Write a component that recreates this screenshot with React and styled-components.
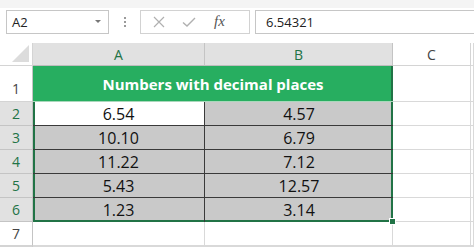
import styled, { createGlobalStyle } from 'styled-components';

const GlobalStyle = createGlobalStyle`
  html, body {
    margin: 0;
    padding: 0;
    background: #ffffff;
    font-family: 'Open Sans', 'Liberation Sans', sans-serif;
    overflow: hidden;
  }
`;

const Page = styled.div`
  width: 474px;
  height: 247px;
  display: flex;
  flex-direction: column;
  background: #fff;
  border-top: 8px solid #f4f4f4;
  box-sizing: border-box;
  overflow: hidden;
`;

const FormulaBar = styled.div`
  display: flex;
  align-items: center;
  height: 26px;
  padding: 1px 0 0 6px;
`;

const NameBox = styled.div`
  width: 103px;
  height: 24px;
  box-sizing: border-box;
  border: 1px solid #c6c6c6;
  display: flex;
  align-items: center;
  justify-content: space-between;
  padding: 0 7px 0 5px;
  font-size: 13px;
  color: #222;
`;

const Caret = styled.span`
  width: 0;
  height: 0;
  border-left: 3px solid transparent;
  border-right: 3px solid transparent;
  border-top: 3px solid #777;
`;

const Dots = styled.div`
  width: 31px;
  display: flex;
  flex-direction: column;
  align-items: center;
  gap: 2px;
  & > span {
    width: 2px;
    height: 2px;
    background: #9a9a9a;
  }
`;

const ButtonBox = styled.div`
  width: 110px;
  height: 24px;
  box-sizing: border-box;
  border: 1px solid #d2d2d2;
  display: flex;
  align-items: center;
  padding-left: 12px;
  gap: 17px;
`;

const Fx = styled.span`
  font-family: 'Liberation Serif', serif;
  font-style: italic;
  font-size: 15px;
  color: #555;
  margin-left: 1px;
`;

const InputBox = styled.div`
  margin-left: 5px;
  flex: 1;
  height: 24px;
  box-sizing: border-box;
  border: 1px solid #c6c6c6;
  border-right: none;
  display: flex;
  align-items: center;
  padding-left: 10px;
  font-size: 13px;
  color: #222;
`;

const Grid = styled.div`
  margin-top: 9px;
  display: grid;
  grid-template-columns: 33px 172px 188px 78px 1fr;
  grid-template-rows: 23px 36px repeat(6, 24px) 1fr;
  flex: 1;
`;

const Corner = styled.div`
  border-right: 1px solid #d4d4d4;
  border-bottom: 1px solid #d4d4d4;
  background: #fff;
  position: relative;
  overflow: hidden;
  &::after {
    content: '';
    position: absolute;
    right: 3px;
    bottom: 3px;
    width: 0;
    height: 0;
    border-left: 17px solid transparent;
    border-bottom: 17px solid #dcdcdc;
  }
`;

const ColHead = styled.div`
  display: flex;
  align-items: center;
  justify-content: center;
  font-size: 14px;
  box-sizing: border-box;
  color: ${(p) => (p.active ? '#217346' : '#444')};
  background: ${(p) => (p.active ? '#e1e1e1' : '#fff')};
  border-right: 1px solid ${(p) => (p.active ? '#c4c4c4' : '#d4d4d4')};
  border-bottom: 1px solid ${(p) => (p.active ? '#bdbdbd' : '#d4d4d4')};
`;

const RowHead = styled.div`
  display: flex;
  align-items: ${(p) => (p.tall ? 'flex-end' : 'center')};
  padding-bottom: ${(p) => (p.tall ? '3px' : '0')};
  justify-content: center;
  font-size: 14px;
  box-sizing: border-box;
  color: ${(p) => (p.active ? '#217346' : '#444')};
  background: ${(p) => (p.active ? '#e1e1e1' : '#fff')};
  border-bottom: 1px solid ${(p) => (p.active ? '#c4c4c4' : '#d4d4d4')};
  border-right: 1px solid #c4c4c4;
`;

const Title = styled.div`
  grid-column: span 2;
  background: #27ae60;
  color: #fff;
  font-weight: 700;
  font-size: 15px;
  display: flex;
  align-items: center;
  justify-content: center;
  border-bottom: 1px solid #a9d8bb;
  box-shadow: inset -2px 0 0 #217346;
`;

const edge = (p) => {
  const s = [];
  if (p.left) s.push('inset 2px 0 0 #217346');
  if (p.right) s.push('inset -2px 0 0 #217346');
  if (p.bottom) s.push('inset 0 -2px 0 #217346');
  return s.length ? s.join(', ') : 'none';
};

const Cell = styled.div`
  position: relative;
  display: flex;
  align-items: center;
  justify-content: center;
  font-size: 16px;
  color: #111;
  box-sizing: border-box;
  background: ${(p) => (p.active ? '#ffffff' : '#c9c9c9')};
  border-bottom: ${(p) => (p.bottom ? 'none' : '1px solid #3a3a3a')};
  border-right: ${(p) => (p.right ? 'none' : '1px solid #3a3a3a')};
  box-shadow: ${edge};
`;

const Handle = styled.span`
  position: absolute;
  right: -3px;
  bottom: -3px;
  width: 5px;
  height: 5px;
  background: #217346;
  border: 1px solid #fff;
  z-index: 2;
`;

const Empty = styled.div`
  border-right: 1px solid #d9d9d9;
  border-bottom: 1px solid #d9d9d9;
`;

const data = [
  ['6.54', '4.57'],
  ['10.10', '6.79'],
  ['11.22', '7.12'],
  ['5.43', '12.57'],
  ['1.23', '3.14'],
];

const CrossIcon = () => (
  <svg width="12" height="12" viewBox="0 0 12 12">
    <path d="M1 1 L11 11 M11 1 L1 11" stroke="#b0b0b0" strokeWidth="1.2" fill="none" />
  </svg>
);

const CheckIcon = () => (
  <svg width="14" height="12" viewBox="0 0 14 12">
    <path d="M1 6.5 L5 10 L13 2" stroke="#b0b0b0" strokeWidth="1.4" fill="none" />
  </svg>
);

export default function App() {
  const last = data.length - 1;
  return (
    <>
      <GlobalStyle />
      <Page>
        <FormulaBar>
          <NameBox>
            A2
            <Caret />
          </NameBox>
          <Dots>
            <span />
            <span />
            <span />
          </Dots>
          <ButtonBox>
            <CrossIcon />
            <CheckIcon />
            <Fx>fx</Fx>
          </ButtonBox>
          <InputBox>6.54321</InputBox>
        </FormulaBar>
        <Grid>
          <Corner />
          <ColHead active>A</ColHead>
          <ColHead active>B</ColHead>
          <ColHead>C</ColHead>
          <Empty />

          <RowHead tall>1</RowHead>
          <Title>Numbers with decimal places</Title>
          <Empty />
          <Empty />

          {data.map((row, i) => [
            <RowHead key={`h${i}`} active>
              {i + 2}
            </RowHead>,
            <Cell key={`a${i}`} active={i === 0} left bottom={i === last}>
              {row[0]}
            </Cell>,
            <Cell key={`b${i}`} right bottom={i === last}>
              {row[1]}
              {i === last && <Handle />}
            </Cell>,
            <Empty key={`c${i}`} />,
            <Empty key={`d${i}`} />,
          ])}

          <RowHead>7</RowHead>
          <Empty />
          <Empty />
          <Empty />
          <Empty />

          <RowHead />
          <Empty />
          <Empty />
          <Empty />
          <Empty />
        </Grid>
      </Page>
    </>
  );
}
